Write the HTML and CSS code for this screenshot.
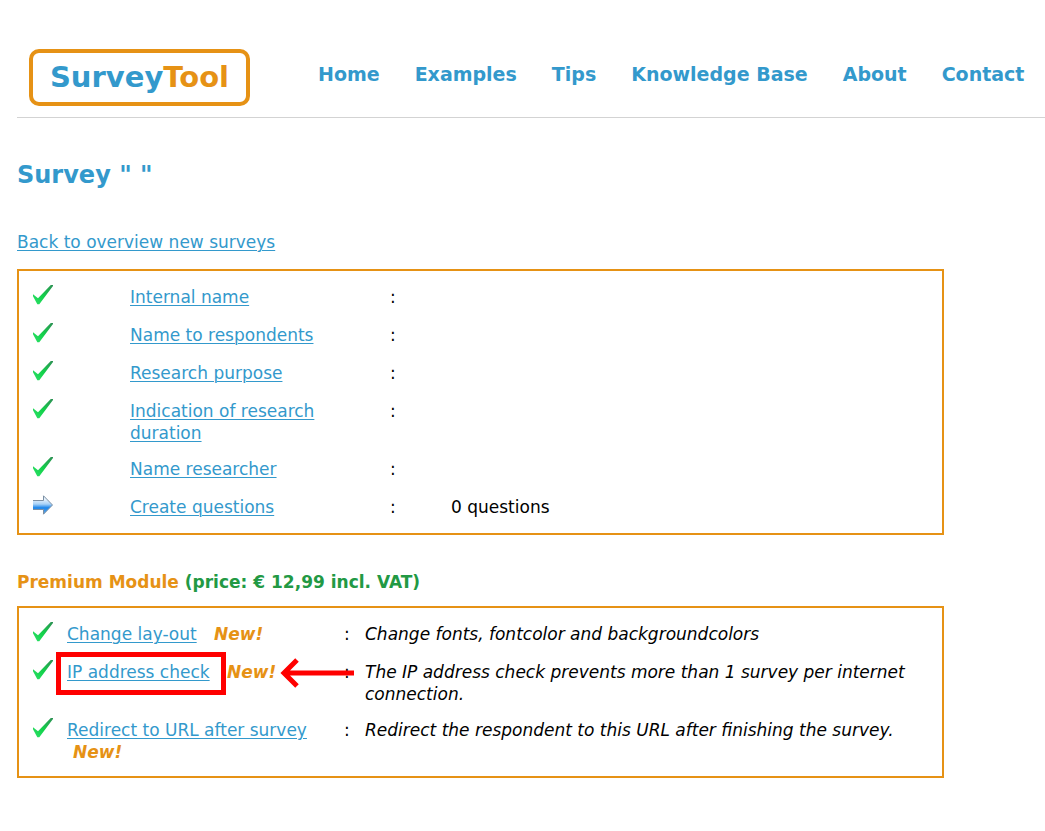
FILE: index.html
```html
<!DOCTYPE html>
<html lang="en">
<head>
    <meta charset="UTF-8">
    <meta name="viewport" content="width=device-width, initial-scale=1.0">
    <title>SurveyTool</title>
    <link rel="stylesheet" href="styles.css">
</head>
<body>
    <svg class="defs" aria-hidden="true">
        <defs>
            <linearGradient id="green" x1="0" y1="1" x2="1" y2="0">
                <stop offset="0" stop-color="#2fe06a"/>
                <stop offset="0.45" stop-color="#12d24a"/>
                <stop offset="1" stop-color="#2f8f55"/>
            </linearGradient>
            <linearGradient id="blue" x1="0" y1="0" x2="0" y2="1">
                <stop offset="0.2" stop-color="#e4f1fc"/>
                <stop offset="0.45" stop-color="#a9d2f7"/>
                <stop offset="0.65" stop-color="#1d86ea"/>
                <stop offset="0.9" stop-color="#4f9fe8"/>
            </linearGradient>
            <symbol id="check" viewBox="0 0 20 20">
                <path fill="url(#green)" d="M0 9.3L5 13.2L17.8 0H20V1L6.3 19.3H4.3L0 11.3Z"/>
            </symbol>
            <symbol id="arrow" viewBox="0 0 20 20">
                <path fill="url(#blue)" stroke="#7c8fa3" d="M0 5.5H10.5V0.8L19.5 10L10.5 19.2V14.5H0"/>
            </symbol>
        </defs>
    </svg>

    <header class="header">
        <a class="logo" href="#">Survey<span>Tool</span></a>
        <nav class="nav">
            <a href="#">Home</a>
            <a href="#">Examples</a>
            <a href="#">Tips</a>
            <a href="#">Knowledge Base</a>
            <a href="#">About</a>
            <a href="#">Contact</a>
        </nav>
    </header>

    <main>
        <h1>Survey " "</h1>
        <a class="back" href="#">Back to overview new surveys</a>

        <div class="box">
            <table class="survey">
                <tr>
                    <td class="icon"><svg><use href="#check"/></svg></td>
                    <td class="label"><a href="#">Internal name</a></td>
                    <td class="colon">:</td>
                    <td></td>
                </tr>
                <tr>
                    <td class="icon"><svg><use href="#check"/></svg></td>
                    <td class="label"><a href="#">Name to respondents</a></td>
                    <td class="colon">:</td>
                    <td></td>
                </tr>
                <tr>
                    <td class="icon"><svg><use href="#check"/></svg></td>
                    <td class="label"><a href="#">Research purpose</a></td>
                    <td class="colon">:</td>
                    <td></td>
                </tr>
                <tr>
                    <td class="icon"><svg><use href="#check"/></svg></td>
                    <td class="label"><a href="#">Indication of research duration</a></td>
                    <td class="colon">:</td>
                    <td></td>
                </tr>
                <tr>
                    <td class="icon"><svg><use href="#check"/></svg></td>
                    <td class="label"><a href="#">Name researcher</a></td>
                    <td class="colon">:</td>
                    <td></td>
                </tr>
                <tr>
                    <td class="icon"><svg><use href="#arrow"/></svg></td>
                    <td class="label"><a href="#">Create questions</a></td>
                    <td class="colon">:</td>
                    <td>0 questions</td>
                </tr>
            </table>
        </div>

        <h2>Premium Module <span class="price">(price: € 12,99 incl. VAT)</span></h2>

        <div class="box">
            <table class="premium">
                <tr>
                    <td class="icon"><svg><use href="#check"/></svg></td>
                    <td class="label"><a href="#">Change lay-out</a> <span class="new">&nbsp;New!</span></td>
                    <td class="colon">:</td>
                    <td class="info">Change fonts, fontcolor and backgroundcolors</td>
                </tr>
                <tr>
                    <td class="icon"><svg><use href="#check"/></svg></td>
                    <td class="label marked">
                        <a href="#">IP address check</a> <span class="new">&nbsp;New!</span>
                        <span class="marker"></span>
                        <svg class="pointer" viewBox="0 0 74 30"><path d="M74 15H4M17 2L4 15L17 28" fill="none" stroke="#ff0000" stroke-width="5"/></svg>
                    </td>
                    <td class="colon">:</td>
                    <td class="info">The IP address check prevents more than 1 survey per internet connection.</td>
                </tr>
                <tr>
                    <td class="icon"><svg><use href="#check"/></svg></td>
                    <td class="label"><a href="#">Redirect to URL after survey</a> <span class="new">&nbsp;New!</span></td>
                    <td class="colon">:</td>
                    <td class="info">Redirect the respondent to this URL after finishing the survey.</td>
                </tr>
            </table>
        </div>
    </main>
</body>
</html>
```
FILE: styles.css
```css
body { font-family: Verdana, "DejaVu Sans", sans-serif; font-size: 17px; line-height: 22px; color: #000; background-color: #fff; margin: 0; padding: 49px 0 40px 17px; }
a { color: #3399cc; text-decoration: underline; text-decoration-thickness: 1px; text-underline-offset: 2px; }
.defs { position: absolute; width: 0; height: 0; }

.header { display: flex; align-items: flex-start; gap: 68px; padding: 0 0 11px 12px; border-bottom: 1px solid #d3d3d3; }
.logo { box-sizing: border-box; width: 221px; height: 57px; flex-shrink: 0; border: 4px solid #e69215; border-radius: 10px; font-size: 29px; font-weight: bold; line-height: 48px; text-align: center; text-decoration: none; }
.logo span { color: #e69215; }
.nav { display: flex; gap: 35px; padding-top: 14px; font-size: 19px; font-weight: bold; white-space: nowrap; }
.nav a { text-decoration: none; }

h1 { margin: 42px 0 0; font-size: 24px; line-height: 30px; color: #3399cc; }
.back { display: inline-block; margin: 41px 0 16px; }
h2 { margin: 36px 0 13px; font-size: 17px; line-height: 22px; color: #e69215; }
.price { color: #229944; }

.box { box-sizing: border-box; max-width: 927px; padding: 8px 14px 6px; border: 2px solid #e69215; }
table { width: 100%; border-collapse: collapse; table-layout: fixed; }
td { height: 24px; padding: 7px 0; vertical-align: top; }
td.icon { padding-top: 6px; }
.icon svg { display: block; width: 20px; height: 20px; }
.survey .icon { width: 97px; }
.survey .label { width: 260px; }
.survey .colon { width: 61px; }
.premium .icon { width: 34px; }
.premium .label { width: 277px; }
.premium .colon { width: 21px; }
.premium a { margin-right: 6px; }
.info { font-style: italic; }
.new { font-weight: bold; font-style: italic; color: #e69215; }

.marked { position: relative; }
.marker { position: absolute; box-sizing: border-box; left: -11px; top: -2px; width: 170px; height: 43px; border: 5px solid #ff0000; }
.pointer { position: absolute; left: 213px; top: 4px; width: 74px; height: 30px; }
```
